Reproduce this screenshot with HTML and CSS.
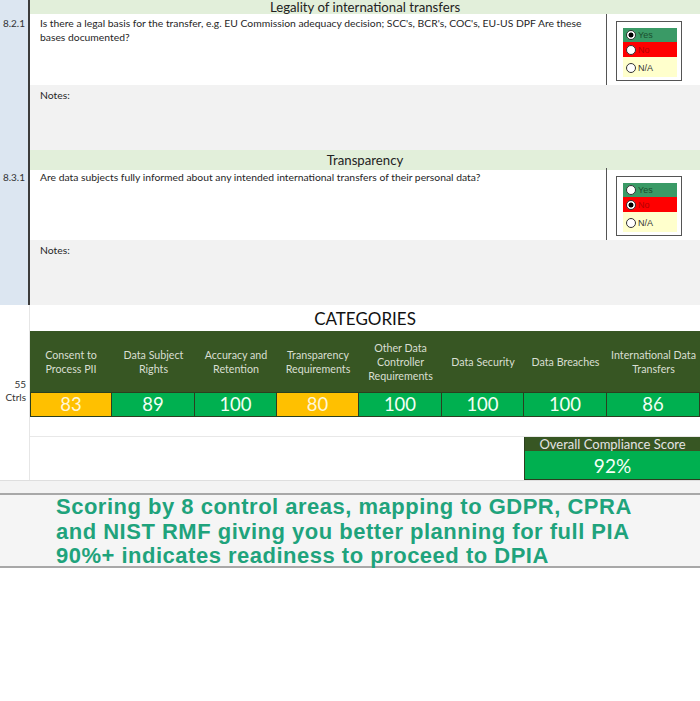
FILE: index.html
```html
<!DOCTYPE html>
<html>
<head>
<meta charset="utf-8">
<link rel="stylesheet" href="styles.css">
</head>
<body>
<div class="top">
  <div class="band band1"><div class="idc"></div><div class="title">Legality of international transfers</div></div>
  <div class="qrow q1">
    <div class="idc num">8.2.1</div>
    <div class="qtext">Is there a legal basis for the transfer, e.g. EU Commission adequacy decision; SCC's, BCR's, COC's, EU-US DPF Are these<br>bases documented?</div>
    <div class="radiocell">
      <div class="rbox">
        <div class="opt yes"><span class="dot on"></span>Yes</div>
        <div class="opt no"><span class="dot"></span>No</div>
        <div class="opt na"><span class="dot"></span>N/A</div>
      </div>
    </div>
  </div>
  <div class="nrow"><div class="idc"></div><div class="notes">Notes:</div></div>
  <div class="band band2"><div class="idc"></div><div class="title">Transparency</div></div>
  <div class="qrow q2">
    <div class="idc num">8.3.1</div>
    <div class="qtext">Are data subjects fully informed about any intended international transfers of their personal data?</div>
    <div class="radiocell">
      <div class="rbox">
        <div class="opt yes"><span class="dot"></span>Yes</div>
        <div class="opt no"><span class="dot on"></span>No</div>
        <div class="opt na"><span class="dot"></span>N/A</div>
      </div>
    </div>
  </div>
  <div class="nrow"><div class="idc"></div><div class="notes">Notes:</div></div>
</div>

<div class="lower">
  <div class="lcol"><div class="ctrls">55<br>Ctrls</div></div>
  <div class="rcol">
    <div class="cat-title">CATEGORIES</div>
    <div class="cat-grid">
      <div class="ch">Consent to<br>Process PII</div>
      <div class="ch">Data Subject<br>Rights</div>
      <div class="ch">Accuracy and<br>Retention</div>
      <div class="ch">Transparency<br>Requirements</div>
      <div class="ch">Other Data<br>Controller<br>Requirements</div>
      <div class="ch">Data Security</div>
      <div class="ch">Data Breaches</div>
      <div class="ch">International Data<br>Transfers</div>
      <div class="sc amber first">83</div>
      <div class="sc green">89</div>
      <div class="sc green">100</div>
      <div class="sc amber">80</div>
      <div class="sc green">100</div>
      <div class="sc green">100</div>
      <div class="sc green">100</div>
      <div class="sc green">86</div>
    </div>
    <div class="spacer"></div>
    <div class="overall-row">
      <div class="overall">
        <div class="ov-head">Overall Compliance Score</div>
        <div class="ov-val">92%</div>
      </div>
    </div>
  </div>
</div>
<div class="gap"></div>
<div class="panel">
  <p>Scoring by 8 control areas, mapping to GDPR, CPRA<br>and NIST RMF giving you better planning for full PIA<br>90%+ indicates readiness to proceed to DPIA</p>
</div>
</body>
</html>
```
FILE: styles.css
```css
* { box-sizing: border-box; }
body {
  margin: 0;
  width: 700px;
  height: 701px;
  overflow: hidden;
  background: #fff;
  font-family: Lato, "Noto Sans", sans-serif;
  color: #262626;
}

.idc {
  background: #dce6f1;
  border-right: 2px solid #3c3c3c;
}

.band {
  display: grid;
  grid-template-columns: 30px 1fr;
}
.band .title {
  background: #e2efda;
  text-align: center;
  font-size: 13.2px;
  color: #222;
}
.band1 { height: 14px; }
.band1 .title { line-height: 14px; }
.band2 { height: 18px; }
.band2 .title { line-height: 20px; }

.qrow {
  display: grid;
  grid-template-columns: 30px 577px 1fr;
  height: 71px;
}
.q2 { height: 72px; }
.num {
  font-size: 10px;
  line-height: 14px;
  text-align: right;
  padding: 2px 3px 0 0;
  color: #333;
}
.qtext {
  font-size: 10.35px;
  line-height: 14px;
  padding: 2px 4px 0 10px;
  border-right: 1px solid #555;
  color: #262626;
  white-space: nowrap;
}
.radiocell { padding: 7px 0 0 9px; }
.q2 .radiocell { padding-top: 8px; }
.rbox {
  width: 66px;
  height: 60px;
  border: 1px solid #555;
  padding: 6px 4px 3px 6px;
  display: flex;
  flex-direction: column;
  background: #fff;
}
.opt {
  display: flex;
  align-items: center;
  gap: 2px;
  font-size: 9px;
  padding-left: 3px;
  font-family: "Liberation Sans", sans-serif;
}
.opt.yes { height: 14px; background: #3a9a66; color: #1b4f2e; }
.opt.no { height: 15px; background: #ff0000; color: #b40000; }
.opt.na { flex: 1; background: #ffffcc; color: #333; padding-top: 2px; }
.dot {
  width: 10px;
  height: 10px;
  border-radius: 50%;
  border: 1px solid #333;
  background: #fff;
  flex: none;
}
.dot.on { background: radial-gradient(circle, #000 0 2.2px, #fff 2.8px); }

.nrow {
  display: grid;
  grid-template-columns: 30px 1fr;
  height: 65px;
}
.notes {
  background: #f2f2f2;
  font-size: 10.35px;
  padding: 4px 10px 0;
  color: #262626;
}

.lower {
  display: flex;
  height: 176px;
  border-bottom: 1px solid #dedede;
}
.lcol {
  width: 30px;
  border-right: 1px solid #e6e6e6;
}
.ctrls {
  font-size: 10px;
  line-height: 13px;
  text-align: right;
  padding: 73px 3px 0 0;
  color: #333;
}
.rcol { flex: 1; }
.cat-title {
  height: 26px;
  text-align: center;
  font-size: 17px;
  line-height: 28px;
  color: #111;
}
.cat-grid {
  display: grid;
  grid-template-columns: 82px 83px 82px 82px 83px 82px 83px 93px;
  grid-template-rows: 61px 25px;
}
.ch {
  background: #375623;
  color: #d9dfd2;
  font-size: 10.7px;
  line-height: 14px;
  display: flex;
  align-items: center;
  justify-content: center;
  text-align: center;
}
.sc {
  font-size: 18.5px;
  line-height: 23px;
  text-align: center;
  border-top: 1px solid #2b3f1f;
  border-bottom: 1px solid #2b3f1f;
  border-right: 1px solid #2b3f1f;
}
.sc.first { border-left: 1px solid #2b3f1f; }
.sc.amber { background: #ffc000; color: #fff6d8; }
.sc.green { background: #00b050; color: #f2fff4; }
.spacer {
  height: 20px;
  border-bottom: 1px solid #e8e8e8;
}
.overall-row {
  display: flex;
  justify-content: flex-end;
  height: 43px;
}
.overall {
  width: 176px;
  border-left: 1px solid #2b3f1f;
}
.ov-head {
  height: 14px;
  background: #375623;
  color: #e4e4e4;
  font-size: 13px;
  line-height: 14px;
  text-align: center;
}
.ov-val {
  height: 29px;
  background: #00b050;
  color: #f4fff6;
  font-size: 19px;
  line-height: 29px;
  text-align: center;
  border-bottom: 1px solid #2b3f1f;
}

.gap {
  height: 12px;
  background: #f3f3f3;
}
.panel {
  height: 75px;
  background: #f5f5f5;
  border-top: 2px solid #a8a8a8;
  border-bottom: 2px solid #a8a8a8;
}
.panel p {
  margin: 0;
  padding: 0 0 0 56px;
  font-family: "Liberation Sans", Arial, sans-serif;
  font-weight: 700;
  font-size: 22px;
  letter-spacing: 0.5px;
  line-height: 24.5px;
  color: #1fa37c;
  white-space: nowrap;
}
```
